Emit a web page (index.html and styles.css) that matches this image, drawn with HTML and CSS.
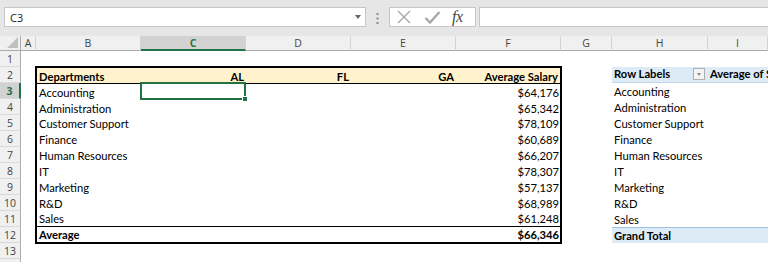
FILE: index.html
```html
<!DOCTYPE html>
<html lang="en">

<head>
    <meta charset="UTF-8">
    <title>Salary by Department</title>
    <link rel="stylesheet" href="styles.css">
</head>

<body>

    <!-- Formula bar -->
    <div class="formula-bar">
        <div class="name-box">
            <span>C3</span>
            <span class="caret"></span>
        </div>
        <svg class="grip" width="3" height="11" viewBox="0 0 3 11">
            <rect x="0.5" y="0" width="2" height="2" fill="#8a8a8a" />
            <rect x="0.5" y="4.5" width="2" height="2" fill="#8a8a8a" />
            <rect x="0.5" y="9" width="2" height="2" fill="#8a8a8a" />
        </svg>
        <div class="fx-buttons">
            <svg width="16" height="16" viewBox="0 0 16 16">
                <path d="M2 2 L14 14 M14 2 L2 14" stroke="#a8a8a8" stroke-width="1.4" fill="none" />
            </svg>
            <svg width="17" height="16" viewBox="0 0 17 16">
                <path d="M1.5 9 L6 13.5 L15.5 3" stroke="#a8a8a8" stroke-width="2.4" fill="none" />
            </svg>
            <span class="fx">fx</span>
        </div>
        <div class="formula-input"></div>
    </div>

    <!-- Sheet -->
    <div class="sheet">
        <div class="corner"><span class="corner-tri"></span></div>
        <div class="col-head">A</div>
        <div class="col-head">B</div>
        <div class="col-head active">C</div>
        <div class="col-head">D</div>
        <div class="col-head">E</div>
        <div class="col-head">F</div>
        <div class="col-head">G</div>
        <div class="col-head">H</div>
        <div class="col-head">I</div>

        <div class="row-head">1</div>
        <div class="row-head">2</div>
        <div class="row-head active">3</div>
        <div class="row-head">4</div>
        <div class="row-head">5</div>
        <div class="row-head">6</div>
        <div class="row-head">7</div>
        <div class="row-head">8</div>
        <div class="row-head">9</div>
        <div class="row-head">10</div>
        <div class="row-head">11</div>
        <div class="row-head">12</div>
        <div class="row-head">13</div>
        <div class="row-head"></div>

        <!-- B2:F12 -->
        <div class="data-table">
            <div class="cell head">Departments</div>
            <div class="cell head num">AL</div>
            <div class="cell head num">FL</div>
            <div class="cell head num">GA</div>
            <div class="cell head num">Average Salary</div>

            <div class="cell name">Accounting</div>
            <div class="cell val">$64,176</div>
            <div class="cell name">Administration</div>
            <div class="cell val">$65,342</div>
            <div class="cell name">Customer Support</div>
            <div class="cell val">$78,109</div>
            <div class="cell name">Finance</div>
            <div class="cell val">$60,689</div>
            <div class="cell name">Human Resources</div>
            <div class="cell val">$66,207</div>
            <div class="cell name">IT</div>
            <div class="cell val">$78,307</div>
            <div class="cell name">Marketing</div>
            <div class="cell val">$57,137</div>
            <div class="cell name">R&amp;D</div>
            <div class="cell val">$68,989</div>
            <div class="cell name">Sales</div>
            <div class="cell val">$61,248</div>

            <div class="cell total label">Average</div>
            <div class="cell total val">$66,346</div>
        </div>

        <div class="selection"></div>

        <!-- Pivot H2:I12 -->
        <div class="pivot">
            <div class="cell pv-head">Row Labels <span class="filter-btn"></span></div>
            <div class="cell pv-head">Average of Salary</div>
            <div class="cell pv-name">Accounting</div>
            <div class="cell pv-name">Administration</div>
            <div class="cell pv-name">Customer Support</div>
            <div class="cell pv-name">Finance</div>
            <div class="cell pv-name">Human Resources</div>
            <div class="cell pv-name">IT</div>
            <div class="cell pv-name">Marketing</div>
            <div class="cell pv-name">R&amp;D</div>
            <div class="cell pv-name">Sales</div>
            <div class="cell pv-total">Grand Total</div>
        </div>
    </div>

</body>

</html>
```

FILE: styles.css
```css
body {
    margin: 0;
    padding: 0;
    width: 768px;
    height: 262px;
    overflow: hidden;
    background-color: #fff;
    font-family: Lato, "Liberation Sans", sans-serif;
    color: #000;
}

/* Formula bar */

.formula-bar {
    display: flex;
    align-items: flex-start;
    height: 36px;
    padding: 7px 0 0 4px;
    box-sizing: border-box;
    background-color: #e6e6e6;
}

.name-box {
    width: 362px;
    height: 20px;
    box-sizing: border-box;
    border: 1px solid #c6c6c6;
    background: #fff;
    display: flex;
    align-items: center;
    justify-content: space-between;
    padding: 0 4px 0 5px;
    font-family: "Open Sans", sans-serif;
    font-size: 11px;
    color: #222;
}

.caret {
    width: 0;
    height: 0;
    border-left: 3.5px solid transparent;
    border-right: 3.5px solid transparent;
    border-top: 4px solid #666;
}

.grip {
    margin: 6px 0 0 10px;
}

.fx-buttons {
    margin-left: 10px;
    width: 87px;
    height: 20px;
    box-sizing: border-box;
    border: 1px solid #c6c6c6;
    background: #fff;
    display: flex;
    align-items: center;
    padding-left: 6px;
    gap: 12px;
}

.fx {
    font-family: "Liberation Serif", serif;
    font-style: italic;
    font-size: 16px;
    color: #444;
    margin-left: -1px;
    letter-spacing: -0.5px;
}

.formula-input {
    flex: 1;
    height: 20px;
    margin: 0 -2px 0 3px;
    box-sizing: border-box;
    border: 1px solid #c6c6c6;
    background: #fff;
}

/* Sheet grid */

.sheet {
    display: grid;
    grid-template-columns: 21px 15px 105px 105px 105px 105px 105px 51px 96px 1fr;
    grid-template-rows: 15px repeat(14, 16px);
    font-size: 11.2px;
}

.corner,
.col-head,
.row-head {
    background-color: #f0f0f0;
    color: #444;
    font-family: "Open Sans", sans-serif;
    font-size: 10.5px;
    box-sizing: border-box;
    display: flex;
    justify-content: center;
    align-items: center;
}

.corner {
    border-right: 1px solid #ababab;
    border-bottom: 1px solid #ababab;
    justify-content: flex-end;
    align-items: flex-end;
    padding: 0 2px 2px 0;
}

.corner-tri {
    width: 0;
    height: 0;
    border-left: 11px solid transparent;
    border-bottom: 11px solid #c0c0c0;
}

.col-head {
    border-right: 1px solid #d4d4d4;
    border-bottom: 1px solid #ababab;
}

.col-head.active {
    background-color: #d2d2d2;
    color: #217346;
    font-weight: bold;
    border-bottom: 2px solid #217346;
}

.row-head {
    grid-column: 1;
    border-right: 1px solid #ababab;
    border-bottom: 1px solid #dadada;
}

.row-head.active {
    background-color: #d2d2d2;
    color: #217346;
    font-weight: bold;
    border-right: 2px solid #217346;
}

.cell {
    padding: 2px 2px 0;
    line-height: 14px;
    white-space: nowrap;
    overflow: hidden;
    box-sizing: border-box;
}

/* Department table */

.data-table {
    grid-column: 3 / 8;
    grid-row: 3 / 14;
    margin: -1px;
    border: 2px solid #000;
    display: grid;
    grid-template-columns: 104px 105px 105px 105px 1fr;
    grid-template-rows: repeat(11, 1fr);
}

.head {
    background-color: #fff2cc;
    font-weight: bold;
    border-bottom: 1px solid #000;
}

.num,
.val {
    text-align: right;
}

.name {
    grid-column: 1;
}

.val {
    grid-column: 5;
    padding-right: 1px;
}

.total {
    font-weight: bold;
    border-top: 1px solid #000;
    padding-top: 1px;
}

.total.label {
    grid-column: 1 / 5;
}

.selection {
    grid-column: 4;
    grid-row: 4;
    margin: -1px 0 -1px -1px;
    border: 2px solid #217346;
    position: relative;
    z-index: 2;
}

.selection::after {
    content: "";
    position: absolute;
    right: -4px;
    bottom: -4px;
    width: 4px;
    height: 4px;
    background: #217346;
    border: 1px solid #fff;
}

/* Pivot */

.pivot {
    grid-column: 9 / 11;
    grid-row: 3 / 14;
    display: grid;
    grid-template-columns: 96px 1fr;
    grid-template-rows: repeat(11, 16px);
}

.pv-head {
    background-color: #ddebf7;
    font-weight: bold;
    display: flex;
    align-items: flex-end;
    justify-content: space-between;
    padding-top: 0;
    padding-bottom: 1px;
    border-bottom: 1px solid #bdd7ee;
}

.filter-btn {
    width: 12px;
    height: 12px;
    box-sizing: border-box;
    border: 1px solid #b0b0b0;
    background: #f4f4f4;
    position: relative;
    margin: 0 1px 1px 0;
}

.filter-btn::after {
    content: "";
    position: absolute;
    left: 3px;
    top: 4px;
    border-left: 2.5px solid transparent;
    border-right: 2.5px solid transparent;
    border-top: 3px solid #888;
}

.pv-name {
    grid-column: 1 / 3;
}

.pv-total {
    grid-column: 1 / 3;
    background-color: #ddebf7;
    font-weight: bold;
    border-top: 1px solid #9bc2e6;
    padding-top: 1px;
}
```
